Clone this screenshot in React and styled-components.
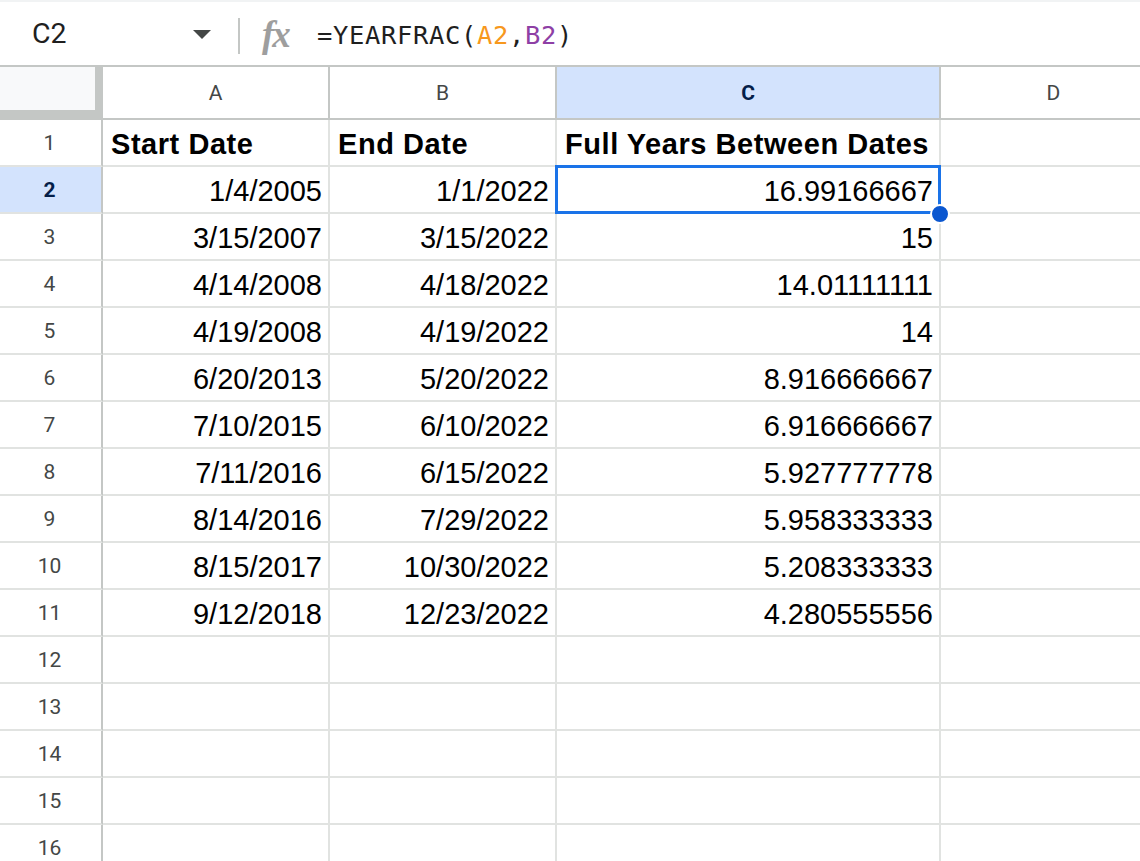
import React from 'react'
import styled, { createGlobalStyle } from 'styled-components'

const GlobalStyle = createGlobalStyle`
  html, body {
    margin: 0;
    padding: 0;
    background: #fff;
    overflow: hidden;
  }
  body {
    font-family: Roboto, "Liberation Sans", Arial, sans-serif;
  }
`

const COLS = [
  { key: 'A', width: 227 },
  { key: 'B', width: 227 },
  { key: 'C', width: 384 },
  { key: 'D', width: 227 },
]

const header = ['Start Date', 'End Date', 'Full Years Between Dates', '']

const rows = [
  ['1/4/2005', '1/1/2022', '16.99166667'],
  ['3/15/2007', '3/15/2022', '15'],
  ['4/14/2008', '4/18/2022', '14.01111111'],
  ['4/19/2008', '4/19/2022', '14'],
  ['6/20/2013', '5/20/2022', '8.916666667'],
  ['7/10/2015', '6/10/2022', '6.916666667'],
  ['7/11/2016', '6/15/2022', '5.927777778'],
  ['8/14/2016', '7/29/2022', '5.958333333'],
  ['8/15/2017', '10/30/2022', '5.208333333'],
  ['9/12/2018', '12/23/2022', '4.280555556'],
]

const TOTAL_ROWS = 16

const Page = styled.div`
  width: 1140px;
  height: 861px;
  overflow: hidden;
  background: #fff;
`

// formula bar
const FormulaBar = styled.div`
  height: 63px;
  border-top: 2px solid #f1f3f4;
  border-bottom: 2px solid #c4c7c5;
  display: flex;
  align-items: center;
`

const NameBox = styled.div`
  width: 238px;
  padding-left: 32px;
  box-sizing: border-box;
  display: flex;
  align-items: center;
  justify-content: space-between;
  padding-right: 27px;
  font-family: Roboto, "Liberation Sans", sans-serif;
  font-size: 28.5px;
  color: #1f1f1f;
`

const Caret = styled.span`
  width: 0;
  height: 0;
  border-left: 9px solid transparent;
  border-right: 9px solid transparent;
  border-top: 9px solid #444746;
  margin-top: 2px;
`

const Divider = styled.div`
  width: 2px;
  height: 36px;
  background: #c4c7c5;
  margin-top: 4px;
`

const Fx = styled.span`
  margin-left: 22px;
  width: 34px;
  font-family: "Liberation Serif", "DejaVu Serif", serif;
  font-style: italic;
  font-weight: bold;
  font-size: 37px;
  color: #9e9e9e;
  letter-spacing: -2px;
  line-height: 1;
  margin-top: 2px;
`

const Formula = styled.div`
  margin-left: 21px;
  font-family: "DejaVu Sans Mono", "Liberation Mono", monospace;
  font-size: 25.5px;
  letter-spacing: 0.65px;
  color: #1f1f1f;
  margin-top: 2px;
`

const Ref = styled.span`
  color: ${({ $c }) => $c};
`

// grid
const Sheet = styled.div`
  display: grid;
  grid-template-columns: 103px ${COLS.map(c => c.width + 'px').join(' ')};
  grid-template-rows: 53px;
  grid-auto-rows: 47px;
`

const Corner = styled.div`
  box-sizing: border-box;
  background: #f8f9fa;
  border-right: 8px solid #c4c7c5;
  border-bottom: 10px solid #c4c7c5;
`

const ColHead = styled.div`
  box-sizing: border-box;
  display: flex;
  align-items: center;
  justify-content: center;
  border-right: 2px solid #c4c7c5;
  border-bottom: 2px solid #c4c7c5;
  background: ${({ $active }) => ($active ? '#d3e3fd' : '#fff')};
  color: ${({ $active }) => ($active ? '#041e49' : '#444746')};
  font-weight: ${({ $active }) => ($active ? 700 : 400)};
  font-family: Roboto, "Liberation Sans", sans-serif;
  font-size: 21px;
  padding-top: 1px;
`

const RowHead = styled.div`
  box-sizing: border-box;
  display: flex;
  align-items: center;
  justify-content: center;
  border-right: 2px solid #c4c7c5;
  border-bottom: 2px solid #e1e3e1;
  background: ${({ $active }) => ($active ? '#d3e3fd' : '#fff')};
  color: ${({ $active }) => ($active ? '#041e49' : '#444746')};
  font-weight: ${({ $active }) => ($active ? 700 : 400)};
  font-family: Roboto, "Liberation Sans", sans-serif;
  font-size: 21px;
  padding-right: 2px;
`

const Cell = styled.div`
  position: relative;
  box-sizing: border-box;
  display: flex;
  align-items: center;
  justify-content: ${({ $align }) => ($align === 'right' ? 'flex-end' : 'flex-start')};
  padding: 3px 6px 0 8px;
  border-right: 2px solid #e1e3e1;
  border-bottom: 2px solid #e1e3e1;
  font-family: "Liberation Sans", Arial, sans-serif;
  font-size: 29px;
  font-weight: ${({ $bold }) => ($bold ? 700 : 400)};
  letter-spacing: ${({ $bold }) => ($bold ? '0.55px' : '0')};
  color: #000;
  white-space: nowrap;
`

const Selection = styled.div`
  position: absolute;
  left: -2px;
  top: -2px;
  right: -2px;
  bottom: -2px;
  border: 3px solid #1a73e8;
  pointer-events: none;
  z-index: 2;
`

const Handle = styled.div`
  position: absolute;
  right: -12px;
  bottom: -13px;
  width: 16px;
  height: 16px;
  border-radius: 50%;
  background: #0b57d0;
  border: 2px solid #fff;
  z-index: 3;
`

export default function App() {
  const body = []
  for (let r = 1; r <= TOTAL_ROWS; r++) {
    body.push(
      <RowHead key={'h' + r} $active={r === 2}>{r}</RowHead>
    )
    COLS.forEach((col, ci) => {
      let text = ''
      let bold = false
      let align = 'right'
      if (r === 1) {
        text = header[ci]
        bold = true
        align = 'left'
      } else if (r - 2 < rows.length) {
        text = rows[r - 2][ci] || ''
      }
      const selected = r === 2 && col.key === 'C'
      body.push(
        <Cell key={col.key + r} $align={align} $bold={bold}>
          {text}
          {selected && (
            <Selection>
              <Handle />
            </Selection>
          )}
        </Cell>
      )
    })
  }

  return (
    <>
      <GlobalStyle />
      <Page>
        <FormulaBar>
          <NameBox>
            <span>C2</span>
            <Caret />
          </NameBox>
          <Divider />
          <Fx>fx</Fx>
          <Formula>
            =YEARFRAC(<Ref $c="#f7981d">A2</Ref>,<Ref $c="#8e3fa5">B2</Ref>)
          </Formula>
        </FormulaBar>
        <Sheet>
          <Corner />
          {COLS.map(c => (
            <ColHead key={c.key} $active={c.key === 'C'}>{c.key}</ColHead>
          ))}
          {body}
        </Sheet>
      </Page>
    </>
  )
}
